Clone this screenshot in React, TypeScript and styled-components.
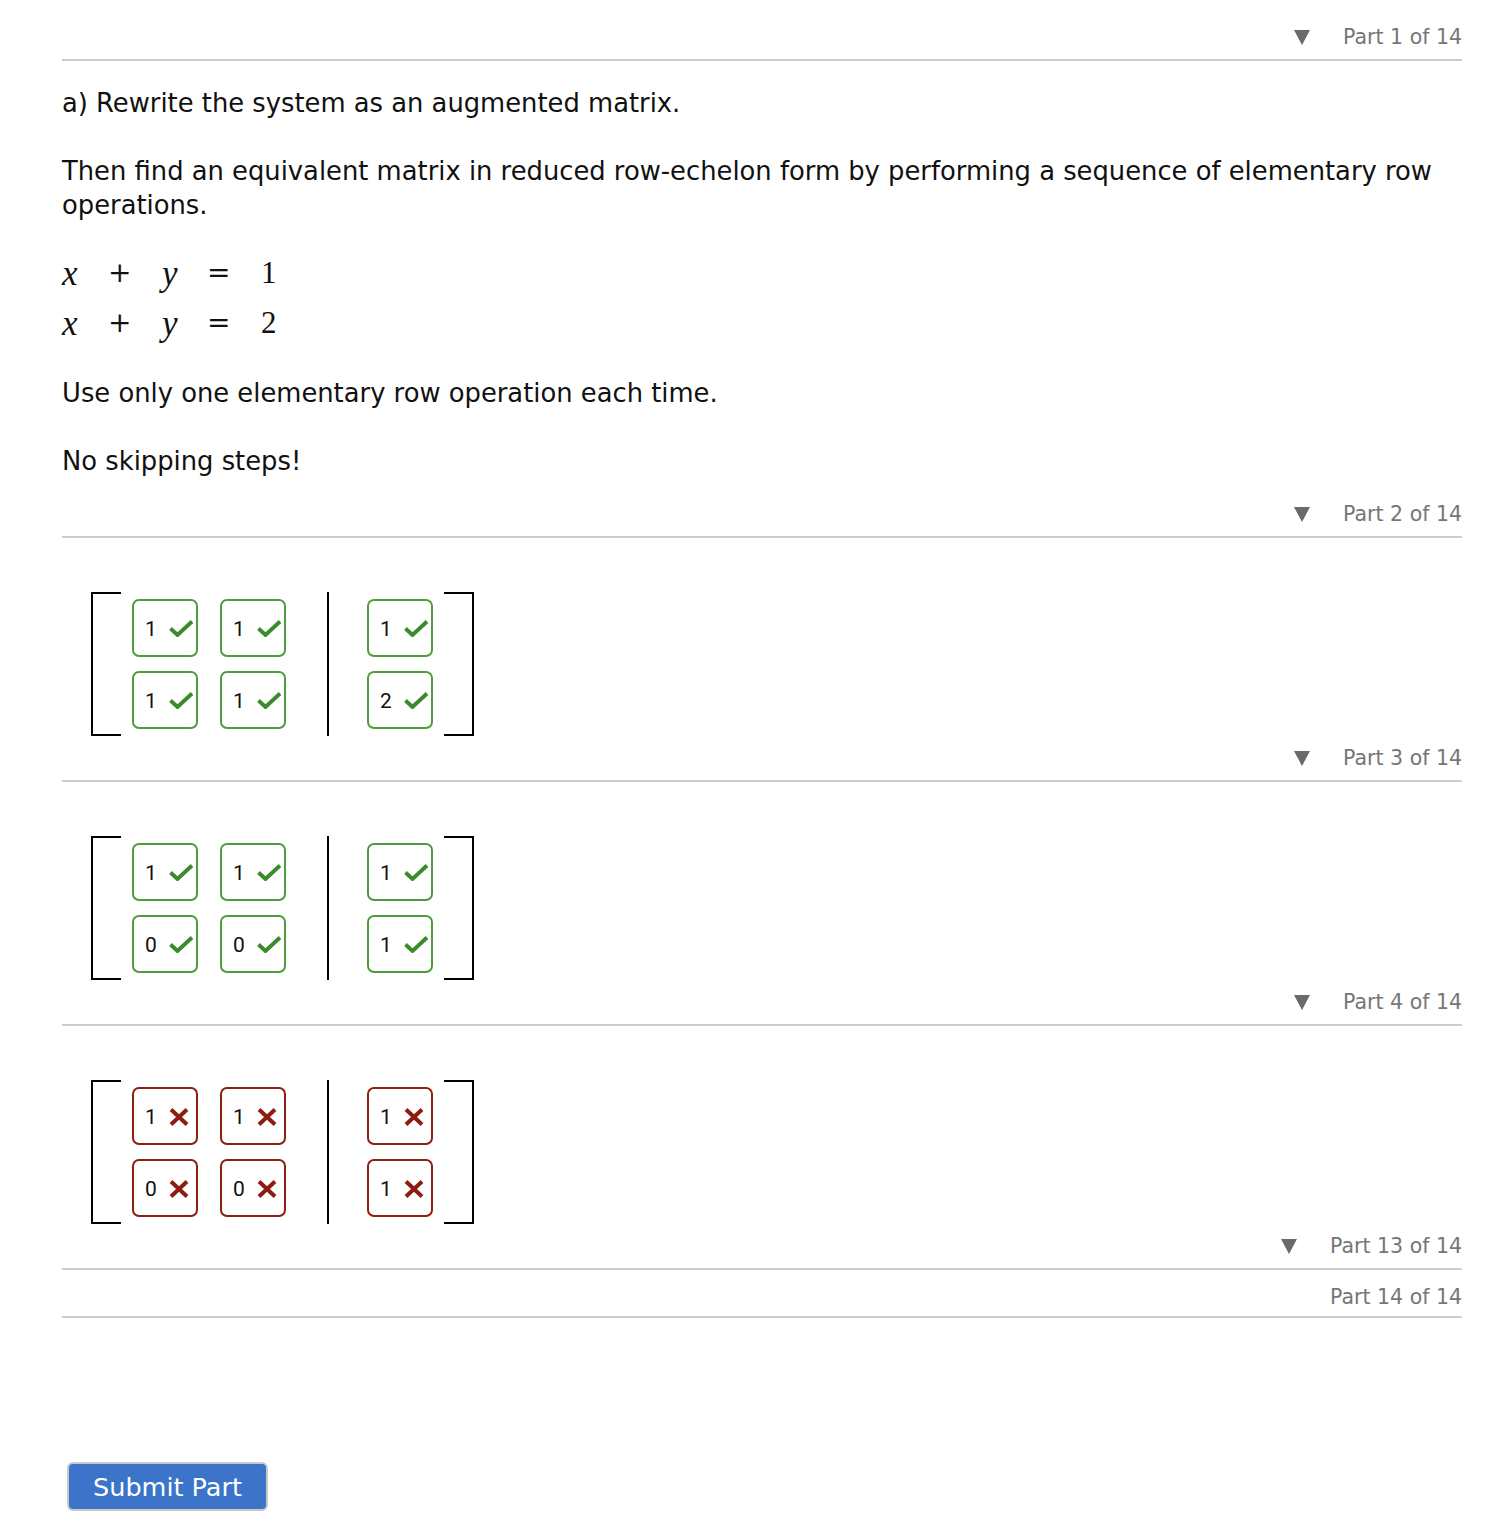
import React from "react";
import styled, { createGlobalStyle } from "styled-components";

const Global = createGlobalStyle`
  html, body { margin: 0; padding: 0; background: #fff; }
  body { font-family: "DejaVu Sans", Verdana, sans-serif; color: #111; }
`;

const Page = styled.div`
  width: 1400px;
  margin-left: 62px;
  padding-top: 15px;
  padding-bottom: 29px;
`;

const PartHeader = styled.div<{ $compact?: boolean }>`
  display: flex;
  justify-content: flex-end;
  align-items: center;
  height: ${(p) => (p.$compact ? 38 : 44)}px;
  margin-top: ${(p) => (p.$compact ? 8 : 0)}px;
  border-bottom: 2px solid #cccccc;
  font-size: 20.5px;
  color: #767676;
`;

const Triangle = styled.span`
  width: 0;
  height: 0;
  border-left: 8.5px solid transparent;
  border-right: 8.5px solid transparent;
  border-top: 15px solid #6a6a6a;
  margin-right: 33px;
  margin-top: 1px;
`;

const Intro = styled.div`
  padding-top: 25px;
  padding-bottom: 14px;
  font-size: 25.8px;
  line-height: 34px;
`;

const Para = styled.p<{ $mt?: number }>`
  margin: ${(p) => p.$mt ?? 34}px 0 0 0;
  &:first-child { margin-top: 0; }
`;

const EqGrid = styled.div`
  display: grid;
  grid-template-columns: 46px 54px 45px 54px auto;
  grid-auto-rows: 50px;
  align-items: center;
  margin-top: 26px;
  font-family: "Liberation Serif", "DejaVu Serif", serif;
  font-size: 31px;
`;

const Var = styled.span`
  font-style: italic;
  font-size: 35px;
  line-height: 1;
`;

const Op = styled.span`
  font-family: "DejaVu Serif", serif;
  font-size: 28px;
`;

const MatrixSection = styled.div`
  padding-top: 54px;
  padding-left: 29px;
`;

const Matrix = styled.div`
  display: flex;
  height: 144px;
`;

const Bracket = styled.div<{ $side: "left" | "right" }>`
  width: 28px;
  border-top: 2px solid #000;
  border-bottom: 2px solid #000;
  ${(p) => (p.$side === "left" ? "border-left: 2px solid #000;" : "border-right: 2px solid #000;")}
`;

const Cells = styled.div<{ $cols: number }>`
  display: grid;
  grid-template-columns: repeat(${(p) => p.$cols}, 66px);
  grid-auto-rows: 58px;
  column-gap: 22px;
  row-gap: 14px;
  padding: 7px 0;
  margin: 0 11px;
`;

const Separator = styled.div`
  width: 2px;
  background: #000;
  margin: 0 27px 0 30px;
`;

const Cell = styled.div<{ $ok: boolean }>`
  box-sizing: border-box;
  display: flex;
  align-items: center;
  padding-left: 11px;
  padding-top: 1px;
  border: 2px solid ${(p) => (p.$ok ? "#4e9c3d" : "#8c1f14")};
  border-radius: 7px;
  font-family: Roboto, "Liberation Sans", sans-serif;
  font-size: 21px;
  color: #111;
`;

const Digit = styled.span`
  width: 24px;
`;

const SubmitWrap = styled.div`
  margin-top: 144px;
  padding-left: 5px;
`;

const SubmitButton = styled.button`
  width: 201px;
  height: 49px;
  box-sizing: border-box;
  border: 2px solid #c9c9c9;
  border-radius: 6px;
  background: #3b74c9;
  color: #fff;
  font-family: "DejaVu Sans", Verdana, sans-serif;
  font-size: 25.5px;
  padding: 0;
  cursor: pointer;
`;

const Check = () => (
  <svg width="25" height="17" viewBox="0 0 25 17">
    <path d="M1.5 8.5 L8.5 15 L23 1.5" fill="none" stroke="#3b8a2c" strokeWidth="3.9" />
  </svg>
);

const Cross = () => (
  <svg width="20" height="18" viewBox="0 0 20 18">
    <path d="M2 1.5 L18 16.5 M18 1.5 L2 16.5" fill="none" stroke="#8c1c12" strokeWidth="4" />
  </svg>
);

type M = { coeffs: string[]; rhs: string[]; ok: boolean };

const MatrixView = ({ m }: { m: M }) => (
  <MatrixSection>
    <Matrix>
      <Bracket $side="left" />
      <Cells $cols={2}>
        {m.coeffs.map((v, i) => (
          <Cell key={i} $ok={m.ok}>
            <Digit>{v}</Digit>
            {m.ok ? <Check /> : <Cross />}
          </Cell>
        ))}
      </Cells>
      <Separator />
      <Cells $cols={1}>
        {m.rhs.map((v, i) => (
          <Cell key={i} $ok={m.ok}>
            <Digit>{v}</Digit>
            {m.ok ? <Check /> : <Cross />}
          </Cell>
        ))}
      </Cells>
      <Bracket $side="right" />
    </Matrix>
  </MatrixSection>
);

const Header = ({ label, arrow = true, compact }: { label: string; arrow?: boolean; compact?: boolean }) => (
  <PartHeader $compact={compact}>
    {arrow && <Triangle />}
    <span>{label}</span>
  </PartHeader>
);

const matrices: { label: string; m: M }[] = [
  { label: "Part 2 of 14", m: { coeffs: ["1", "1", "1", "1"], rhs: ["1", "2"], ok: true } },
  { label: "Part 3 of 14", m: { coeffs: ["1", "1", "0", "0"], rhs: ["1", "1"], ok: true } },
  { label: "Part 4 of 14", m: { coeffs: ["1", "1", "0", "0"], rhs: ["1", "1"], ok: false } },
];

export default function App() {
  return (
    <>
      <Global />
      <Page>
        <Header label="Part 1 of 14" />
        <Intro>
          <Para>a) Rewrite the system as an augmented matrix.</Para>
          <Para>
            Then find an equivalent matrix in reduced row-echelon form by performing a sequence of elementary row
            operations.
          </Para>
          <EqGrid>
            <Var>x</Var>
            <Op>+</Op>
            <Var>y</Var>
            <Op>=</Op>
            <span>1</span>
            <Var>x</Var>
            <Op>+</Op>
            <Var>y</Var>
            <Op>=</Op>
            <span>2</span>
          </EqGrid>
          <Para $mt={28}>Use only one elementary row operation each time.</Para>
          <Para>No skipping steps!</Para>
        </Intro>
        {matrices.map((s) => (
          <React.Fragment key={s.label}>
            <Header label={s.label} />
            <MatrixView m={s.m} />
          </React.Fragment>
        ))}
        <Header label="Part 13 of 14" />
        <Header label="Part 14 of 14" arrow={false} compact />
        <SubmitWrap>
          <SubmitButton>Submit Part</SubmitButton>
        </SubmitWrap>
      </Page>
    </>
  );
}
